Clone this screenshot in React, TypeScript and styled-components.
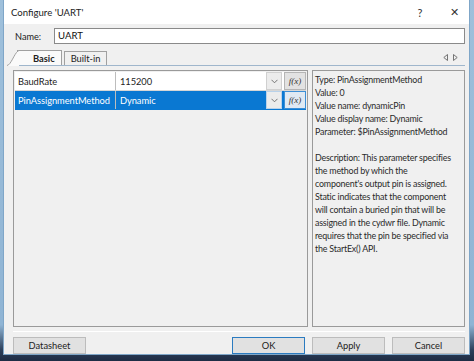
import React from "react";
import styled, { createGlobalStyle } from "styled-components";

const Global = createGlobalStyle`
  html, body { margin: 0; padding: 0; }
  body { font-family: Lato, "Noto Sans", sans-serif; }
  * { box-sizing: border-box; }
`;

const Desktop = styled.div`
  width: 474px;
  height: 361px;
  background: linear-gradient(180deg, #9fc0db 0%, #8fb4d4 90%, #2c3f5a 97%, #1e2c44 100%);
  display: flex;
  overflow: hidden;
`;

const Window = styled.div`
  margin: 0 4px 6px 3px;
  flex: 1;
  background: #f0f0f0;
  display: flex;
  flex-direction: column;
  border-left: 1px solid #7fa6c8;
  border-right: 1px solid #7fa6c8;
  border-bottom: 1px solid #7fa6c8;
`;

const TitleBar = styled.div`
  height: 24px;
  background: #ffffff;
  display: flex;
  align-items: center;
  padding-left: 7px;
  color: #222;
  font-size: 9.6px;
`;

const Title = styled.span`
  flex: 1;
`;

const TitleButton = styled.span<{ $w: number }>`
  width: ${(p) => p.$w}px;
  text-align: center;
  font-size: 11px;
  color: #333;
`;

const Body = styled.div`
  flex: 1;
  display: flex;
  flex-direction: column;
  padding: 0 4px 0 9px;
`;

const NameRow = styled.div`
  display: flex;
  align-items: center;
  margin-top: 4px;
  height: 16px;
`;

const Label = styled.span`
  width: 41px;
  font-size: 9.2px;
  color: #222;
  padding-left: 2px;
`;

const NameInput = styled.div`
  flex: 1;
  height: 16px;
  background: #fff;
  border: 1px solid #8a8a8a;
  font-size: 9.6px;
  color: #111;
  padding-left: 3px;
  line-height: 14px;
`;

const TabBar = styled.div`
  margin-top: 6px;
  height: 16px;
  display: flex;
  align-items: flex-end;
  border-bottom: 1px solid #9fb6cc;
  padding-left: 4px;
`;

const Tab = styled.div<{ $active?: boolean }>`
  position: relative;
  height: ${(p) => (p.$active ? 15 : 14)}px;
  padding: 0 6px 0 ${(p) => (p.$active ? 16 : 6)}px;
  margin-left: ${(p) => (p.$active ? 0 : 2)}px;
  font-size: 9.3px;
  font-weight: ${(p) => (p.$active ? 700 : 400)};
  color: #222;
  display: flex;
  align-items: center;
  border-top: 1px solid #a0a0a0;
  border-right: 1px solid #a0a0a0;
  border-left: ${(p) => (p.$active ? "none" : "1px solid #a0a0a0")};
  background: ${(p) => (p.$active ? "#fafafa" : "#f0f0f0")};
`;

const TabSlant = styled.svg`
  position: absolute;
  left: -10px;
  top: -1px;
`;

const TabSpacer = styled.div`
  flex: 1;
`;

const TabArrows = styled.div`
  display: flex;
  gap: 5px;
  padding-bottom: 4px;
  padding-right: 7px;
`;

const Content = styled.div`
  margin-top: 4px;
  display: flex;
  gap: 4px;
  height: 257px;
`;

const GridPanel = styled.div`
  width: 295px;
  border: 1px solid #9a9a9a;
  background: #f0f0f0;
  padding: 1px;
`;

const Row = styled.div<{ $selected?: boolean }>`
  display: flex;
  height: 19px;
  background: ${(p) => (p.$selected ? "#0a78d2" : "#fff")};
  color: ${(p) => (p.$selected ? "#fff" : "#222")};
  border-bottom: 1px solid ${(p) => (p.$selected ? "#0a78d2" : "#d6d6d6")};
  font-size: 9.3px;
  letter-spacing: -0.05px;
`;

const NameCell = styled.div`
  width: 101px;
  padding-left: 3px;
  display: flex;
  align-items: center;
  border-right: 1px solid #bdbdbd;
  white-space: nowrap;
  overflow: hidden;
`;

const ValueCell = styled.div`
  flex: 1;
  padding-left: 4px;
  display: flex;
  align-items: center;
`;

const DropButton = styled.div<{ $selected?: boolean }>`
  width: 16px;
  height: 18px;
  background: #ececec;
  border: 1px solid ${(p) => (p.$selected ? "#b9d2ea" : "#d0d0d0")};
  display: flex;
  align-items: center;
  justify-content: center;
`;

const FxButton = styled.div<{ $selected?: boolean }>`
  width: 22px;
  height: 18px;
  margin-left: 2px;
  background: ${(p) => (p.$selected ? "#dfe9f3" : "#e2e2e2")};
  border: 1px solid ${(p) => (p.$selected ? "#3c8fd6" : "#b5b5b5")};
  color: #333;
  font-family: "Liberation Serif", serif;
  font-style: italic;
  font-size: 9px;
  letter-spacing: 0;
  display: flex;
  align-items: center;
  justify-content: center;
`;

const InfoPanel = styled.div`
  flex: 1;
  border: 1px solid #9a9a9a;
  background: #f0f0f0;
  padding: 2px 2px 0 2px;
  font-size: 8.9px;
  letter-spacing: -0.2px;
  line-height: 13px;
  color: #2a2a2a;
  white-space: nowrap;
  overflow: hidden;
`;

const InfoLine = styled.div<{ $gap?: boolean }>`
  margin-top: ${(p) => (p.$gap ? 13 : 0)}px;
`;

const Separator = styled.div`
  margin-top: 4px;
  height: 1px;
  background: #d0d0d0;
  border-bottom: 1px solid #fff;
`;

const ButtonRow = styled.div`
  margin-top: 5px;
  display: flex;
  gap: 7px;
`;

const Button = styled.div<{ $default?: boolean }>`
  width: 73px;
  height: 17px;
  background: #e1e1e1;
  border: 1px solid ${(p) => (p.$default ? "#2b7bc0" : "#bcbcbc")};
  font-size: 9.3px;
  color: #222;
  display: flex;
  align-items: center;
  justify-content: center;
`;

const Spacer = styled.div`
  flex: 1;
`;

const Chevron = () => (
  <svg width="7" height="5" viewBox="0 0 7 5">
    <path d="M0.5 0.8 L3.5 3.8 L6.5 0.8" fill="none" stroke="#666" strokeWidth="0.9" />
  </svg>
);

const Arrow = ({ dir }: { dir: "left" | "right" }) => (
  <svg width="5" height="7" viewBox="0 0 5 7">
    <path
      d={dir === "left" ? "M4.5 0.5 L0.8 3.5 L4.5 6.5 Z" : "M0.5 0.5 L4.2 3.5 L0.5 6.5 Z"}
      fill="none"
      stroke="#666"
      strokeWidth="0.9"
    />
  </svg>
);

const infoLines = [
  "Type: PinAssignmentMethod",
  "Value: 0",
  "Value name: dynamicPin",
  "Value display name: Dynamic",
  "Parameter: $PinAssignmentMethod",
];

const descLines = [
  "Description: This parameter specifies",
  "the method by which the",
  "component's output pin is assigned.",
  "Static indicates that the component",
  "will contain a buried pin that will be",
  "assigned in the cydwr file. Dynamic",
  "requires that the pin be specified via",
  "the StartEx() API.",
];

export default function App() {
  return (
    <>
      <Global />
      <Desktop>
        <Window>
          <TitleBar>
            <Title>Configure 'UART'</Title>
            <TitleButton $w={38}>?</TitleButton>
            <TitleButton $w={30}>✕</TitleButton>
          </TitleBar>
          <Body>
            <NameRow>
              <Label>Name:</Label>
              <NameInput>UART</NameInput>
            </NameRow>
            <TabBar>
              <Tab $active>
                <TabSlant width="12" height="16" viewBox="0 0 12 16">
                  <path d="M0 16 C4 15 7 4 11 1 L12 0.5 L12 16 Z" fill="#fafafa" />
                  <path d="M0 15.5 C4 15 7 4 11 1 L12 0.5" fill="none" stroke="#a0a0a0" strokeWidth="1" />
                </TabSlant>
                Basic
              </Tab>
              <Tab>Built-in</Tab>
              <TabSpacer />
              <TabArrows>
                <Arrow dir="left" />
                <Arrow dir="right" />
              </TabArrows>
            </TabBar>
            <Content>
              <GridPanel>
                <Row>
                  <NameCell>BaudRate</NameCell>
                  <ValueCell>115200</ValueCell>
                  <DropButton>
                    <Chevron />
                  </DropButton>
                  <FxButton>f(x)</FxButton>
                </Row>
                <Row $selected>
                  <NameCell>PinAssignmentMethod</NameCell>
                  <ValueCell>Dynamic</ValueCell>
                  <DropButton $selected>
                    <Chevron />
                  </DropButton>
                  <FxButton $selected>f(x)</FxButton>
                </Row>
              </GridPanel>
              <InfoPanel>
                {infoLines.map((l) => (
                  <InfoLine key={l}>{l}</InfoLine>
                ))}
                {descLines.map((l, i) => (
                  <InfoLine key={l} $gap={i === 0}>
                    {l}
                  </InfoLine>
                ))}
              </InfoPanel>
            </Content>
            <Separator />
            <ButtonRow>
              <Button>Datasheet</Button>
              <Spacer />
              <Button $default>OK</Button>
              <Button>Apply</Button>
              <Button>Cancel</Button>
            </ButtonRow>
          </Body>
        </Window>
      </Desktop>
    </>
  );
}
